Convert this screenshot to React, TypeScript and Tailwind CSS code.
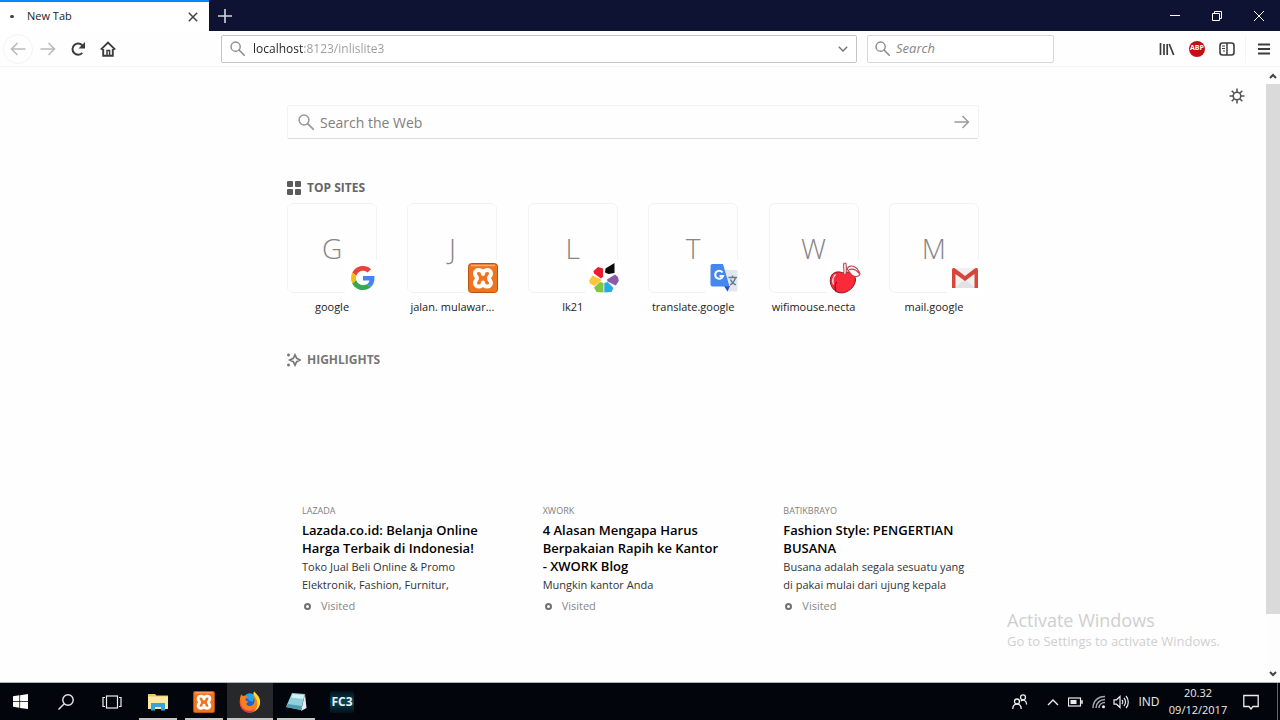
import type { ReactNode } from "react";

function SearchGlyph({ className }: { className: string }) {
  return (
    <svg viewBox="0 0 16 16" className={className} fill="none" stroke="currentColor" aria-hidden="true">
      <circle cx="6" cy="6" r="4.9" strokeWidth="1.5" />
      <path d="M9.6 9.6 15.2 15.200" strokeWidth="1.7" strokeLinecap="round" />
    </svg>
  );
}

function XamppLogo({ className }: { className: string }) {
  return (
    <svg viewBox="0 0 30 30" className={className} aria-hidden="true">
      <rect x="0.5" y="0.5" width="29" height="29" rx="3" fill="#f0741f" stroke="#b8530f" />
      <path d="M3 2.5h24" stroke="#fbb27a" strokeWidth="1.4" />
      <path
        d="M15 11C15 6 7 5.500 7 10.500C7 13 9 13.500 9 15.300C9 17 7 17.500 7 20C7 25 15 24.500 15 19.500C15 24.500 23 25 23 20C23 17.500 21 17 21 15.300C21 13.500 23 13 23 10.500C23 5.500 15 6 15 11z"
        fill="#f0741f"
        stroke="#fff"
        strokeWidth="4"
        strokeLinejoin="round"
      />
    </svg>
  );
}

function GoogleLogo() {
  return (
    <svg viewBox="0 0 48 48" className="size-6" aria-hidden="true">
      <path fill="#EA4335" d="M24 9.500c3.540 0 6.710 1.220 9.210 3.600l6.850-6.850C35.900 2.380 30.470 0 24 0 14.620 0 6.510 5.380 2.560 13.220l7.980 6.190C12.430 13.720 17.740 9.500 24 9.500z" />
      <path fill="#4285F4" d="M46.980 24.550c0-1.570-.15-3.090-.38-4.550H24v9.020h12.940c-.58 2.960-2.260 5.480-4.780 7.180l7.730 6c4.510-4.180 7.090-10.360 7.090-17.650z" />
      <path fill="#FBBC05" d="M10.530 28.590c-.48-1.450-.76-2.990-.76-4.590s.27-3.140.76-4.590l-7.980-6.190C.92 16.460 0 20.120 0 24c0 3.880.92 7.540 2.560 10.780l7.970-6.190z" />
      <path fill="#34A853" d="M24 48c6.480 0 11.930-2.130 15.890-5.810l-7.730-6c-2.150 1.450-4.920 2.300-8.160 2.300-6.260 0-11.570-4.220-13.470-9.910l-7.980 6.190C6.510 42.620 14.620 48 24 48z" />
    </svg>
  );
}

function Lk21Logo() {
  return (
    <svg viewBox="0 0 30 30" className="size-[30px]" aria-hidden="true">
      <path fill="#0c0c0c" d="M16.500 5.500 25.500 0v10l-6 1-3.500-1.500z" />
      <path fill="#ee1c2e" d="M4.500 8 9 4l5 1.500v8L12 15.500 5 10.500z" />
      <path fill="#fbc63c" d="M0 17.500 3.500 12.500l8.500 4v1.500l-6.500 5L1.500 21z" />
      <path fill="#84c441" d="M5 24.500l6-5.500 3.500 1v9.500L7.500 29z" />
      <path fill="#25ace3" d="M15.300 20l3.200-1 6 6-2 4-7.200.500z" />
      <path fill="#8a5cab" d="M18 16.500 26 11.500l3 2.500.8 4-3 4.500-8.300-4z" />
    </svg>
  );
}

function TranslateLogo() {
  return (
    <svg viewBox="0 0 28 28" className="size-7" aria-hidden="true">
      <path d="M11 6h15a1.500 1.500 0 0 1 1.500 1.500V26a1.500 1.500 0 0 1-1.500 1.500H17z" fill="#e3e6ec" />
      <path d="M14 22h6l-2.500 5.500z" fill="#2b50b4" />
      <path d="M2 0h11l6.500 22.500H2.500A2 2 0 0 1 .5 20.500V2A2 2 0 0 1 2 0z" fill="#4587ee" />
      <path d="M12.500 8.500A4 4 0 1 0 13 12H9.500" fill="none" stroke="#fff" strokeWidth="2.100" />
      <path d="M18.500 13.500h8.500M22.500 11.500v2M25.500 13.500c-.8 3.500-3 6-5.500 7.500M20.500 15.500c1 2.500 3 4.500 5.500 5.500" fill="none" stroke="#66788a" strokeWidth="1.300" />
    </svg>
  );
}

function AppleLogo() {
  return (
    <svg viewBox="0 0 32 32" className="size-8" aria-hidden="true">
      <path d="M14 11C9 8.500 2 10 1.300 17.500c-.3 5 1.700 9 5.700 12 2 1.300 6 1.800 8.500 1C21 29 26 24 26.500 18 26.500 11 20 8.500 14 11z" fill="#fa2a38" stroke="#8a1420" strokeWidth="1" />
      <path d="M6.500 12.500c-3 3-3 7-2 10" fill="none" stroke="#fff" strokeWidth="1.100" />
      <path d="M7 29c-1.500-3-1-6 .5-9" fill="none" stroke="#7c0c18" strokeWidth="1.100" />
      <path d="M14.500 12c1-3-.5-7 0-10.500l2.500-.5c.3 4 1 7 0 10.500" fill="#fbd5d8" stroke="#a8404c" strokeWidth="0.900" />
      <path d="M18 7c2-5 10-4 13 5-1 3-5 3-7.500 1.500C21 12 20 8.500 18 7zM20 7.500c4-1 8 1 10 4" fill="#fff4f4" stroke="#b84450" strokeWidth="1.100" />
    </svg>
  );
}

function GmailLogo() {
  return (
    <svg viewBox="0 0 28 22" className="h-[22px] w-7" aria-hidden="true">
      <rect x="1" y="1" width="26" height="20" rx="1.500" fill="#f1f1f1" />
      <path d="M4 21 14 12l10 9z" fill="#e2e2e2" />
      <path d="M1 21V3.200C1 .8 3 .6 4.200 1.500L14 9l9.800-7.500C25 .6 27 .8 27 3.200V21h-3.500V7L14 14 4.500 7v14z" fill="#d8453a" />
    </svg>
  );
}

function FirefoxLogo() {
  return (
    <svg viewBox="0 0 24 24" className="size-[22px]" aria-hidden="true">
      <circle cx="11.500" cy="11.500" r="8.500" fill="#1a62c9" />
      <path d="M6 6c3-5 9-4 11-1l-2 7-4-2z" fill="#23a4ea" />
      <path d="M2.500 3.500C3 5 4 5.500 6 5.300c1.500 0 2.500.5 3.500 1.500-2 .7-2.500 1.500-2.300 3 .5 1 2 1.200 3 1.500 0 1.500-1.500 1.700-2.200 2.500 1 2.500 4 3.200 6.500 1.700 3-2 3-6 1.500-8.500-1-2-1-4.500.5-6.500 1.500 2.500 6.500 5 6.500 11.500C23 18.500 18 23.500 12 23.500S.8 19 .8 12.500c0-3.500.5-6.500 1.700-9z" fill="#fb7d1e" />
      <path d="M16.500.5c1.500 2.500 6.500 5 6.500 11.500 0 4-2.500 8-6 9.800 3-3.300 4-8.300 2-12.800-1.500-3-3.500-5-2.500-8.500z" fill="#fde02f" />
      <path d="M1.500 8C.5 15 4 21 11 21.500c3 0 5-1 6.500-2.500-1.500 3-4 4.500-6 4.500C4.500 23.500-.5 17 1.500 8z" fill="#e5285b" />
    </svg>
  );
}

const sites: { letter: string; name: string; logo: ReactNode }[] = [
  { letter: "G", name: "google", logo: <GoogleLogo /> },
  { letter: "J", name: "jalan. mulawar...", logo: <XamppLogo className="size-[30px]" /> },
  { letter: "L", name: "lk21", logo: <Lk21Logo /> },
  { letter: "T", name: "translate.google", logo: <TranslateLogo /> },
  { letter: "W", name: "wifimouse.necta", logo: <AppleLogo /> },
  { letter: "M", name: "mail.google", logo: <GmailLogo /> },
];

const highlights = [
  { source: "LAZADA", title: "Lazada.co.id: Belanja Online\nHarga Terbaik di Indonesia!", text: "Toko Jual Beli Online & Promo\nElektronik, Fashion, Furnitur," },
  { source: "XWORK", title: "4 Alasan Mengapa Harus\nBerpakaian Rapih ke Kantor\n- XWORK Blog", text: "Mungkin kantor Anda" },
  { source: "BATIKBRAYO", title: "Fashion Style: PENGERTIAN\nBUSANA", text: "Busana adalah segala sesuatu yang\ndi pakai mulai dari ujung kepala" },
];

function TabStrip() {
  return (
    <header className="flex h-[31px] shrink-0 bg-[#0f1333] text-white">
      <div className="flex w-[209px] items-center border-t-2 border-[#0a84ff] bg-white pr-2 pl-[10px] text-[#222]">
        <span className="h-[3px] w-1 rounded-full bg-[#444]" />
        <span className="ml-[13px] flex-1 text-[11px]">New Tab</span>
        <button aria-label="Close tab" className="flex size-4 items-center justify-center text-[#444]">
          <svg viewBox="0 0 10 10" className="size-[10px]" stroke="currentColor" strokeWidth="1.500">
            <path d="m.8.8 8.400 8.400M9.200.8.800 9.200" />
          </svg>
        </button>
      </div>
      <button aria-label="Open a new tab" className="flex w-8 items-center justify-center">
        <svg viewBox="0 0 14 14" className="size-[14px]" stroke="#d4d6e2" strokeWidth="1.600">
          <path d="M7 0v14M0 7h14" />
        </svg>
      </button>
      <div className="ml-auto flex">
        <button aria-label="Minimize" className="flex w-[42px] items-center justify-center">
          <span className="h-px w-[10px] bg-white" />
        </button>
        <button aria-label="Restore" className="flex w-[42px] items-center justify-center">
          <svg viewBox="0 0 10 10" className="size-[10px]" fill="none" stroke="#fff">
            <path d="M.5 2.500h7v7h-7zM2.500 2.500v-2h7v7h-2" />
          </svg>
        </button>
        <button aria-label="Close window" className="flex w-[42px] items-center justify-center">
          <svg viewBox="0 0 10 10" className="size-[10px]" stroke="#fff">
            <path d="m0 0 10 10M10 0 0 10" />
          </svg>
        </button>
      </div>
    </header>
  );
}

function ToolButton({ label, children }: { label: string; children: ReactNode }) {
  return (
    <button aria-label={label} className="flex size-[30px] shrink-0 items-center justify-center rounded-full text-[#3c3c40]">
      {children}
    </button>
  );
}

function Toolbar() {
  return (
    <nav className="flex h-9 shrink-0 items-center border-b border-[#f4f4f4] bg-[#fefefe] pr-px pl-[3px]">
      <button aria-label="Back" className="flex size-[30px] shrink-0 items-center justify-center rounded-full border border-[#f4f4f4] text-[#bbb]">
        <svg viewBox="0 0 16 16" className="size-4" fill="none" stroke="currentColor" strokeWidth="1.600">
          <path d="M15.500 8H1.500M7.500 2l-6 6 6 6" />
        </svg>
      </button>
      <ToolButton label="Forward">
        <svg viewBox="0 0 16 16" className="size-4 text-[#bbb]" fill="none" stroke="currentColor" strokeWidth="1.600">
          <path d="M.5 8h14M8.500 2l6 6-6 6" />
        </svg>
      </ToolButton>
      <ToolButton label="Reload">
        <svg viewBox="0 0 16 16" className="size-4" fill="none" stroke="currentColor" strokeWidth="2">
          <path d="M12.300 11.800A5.600 5.600 0 1 1 12.500 4.600" />
          <path d="M15 1v6.500H8.500z" fill="currentColor" stroke="none" />
        </svg>
      </ToolButton>
      <ToolButton label="Home">
        <svg viewBox="0 0 16 16" className="size-4" fill="none" stroke="currentColor" strokeWidth="1.900">
          <path d="M.8 8.600 8 1.600l7.200 7M3.200 8v6.800h9.600V8" />
          <path d="M7 14.500V9.500h2.600v5" strokeWidth="1.500" />
        </svg>
      </ToolButton>
      <div className="ml-[98px] flex h-7 min-w-0 flex-1 items-center rounded-xs border border-[#c4c4c4] bg-white px-2">
        <SearchGlyph className="size-[15px] shrink-0 text-[#8c8c8c]" />
        <input
          aria-label="Address"
          defaultValue="localhost:8123/inlislite3"
          className="ml-2 min-w-0 flex-1 bg-linear-to-r from-[#222] from-[51px] to-[#999] to-[51px] bg-clip-text pt-px text-[12px] text-transparent outline-none"
        />
        <button aria-label="Show history" className="text-[#777]">
          <svg viewBox="0 0 10 6" className="h-[6px] w-[10px]" fill="none" stroke="currentColor" strokeWidth="1.500">
            <path d="m.8.8 4.200 4.200L9.200.8" />
          </svg>
        </button>
      </div>
      <div className="ml-[10px] flex h-7 w-[187px] shrink-0 items-center rounded-xs border border-[#d8d8d8] bg-white px-[7px]">
        <SearchGlyph className="size-[15px] shrink-0 text-[#8c8c8c]" />
        <input aria-label="Search" placeholder="Search" className="ml-[6px] min-w-0 flex-1 pt-px text-[13px] italic outline-none placeholder:text-[#858585]" />
      </div>
      <div className="ml-[98px] flex shrink-0 items-center">
        <ToolButton label="Library">
          <svg viewBox="0 0 16 16" className="size-4" fill="none" stroke="currentColor" strokeWidth="1.700">
            <path d="M1.500 2v12M5 3v11M8.200 3v11M10.200 3l4.500 11" />
          </svg>
        </ToolButton>
        <ToolButton label="Adblock Plus">
          <span className="flex size-4 items-center justify-center rounded-full bg-[#c70d12] text-[7px] font-bold text-white">ABP</span>
        </ToolButton>
        <ToolButton label="Sidebars">
          <svg viewBox="0 0 16 16" className="size-4" fill="none" stroke="currentColor">
            <rect x="1" y="2" width="14" height="12" rx="2.500" strokeWidth="1.600" />
            <path d="M8 2v12" strokeWidth="1.500" />
            <path d="M3 5h3M3 7.500h3M4 10h2" strokeWidth="1" />
          </svg>
        </ToolButton>
        <span className="mx-[3px] h-7 w-px bg-[#f4f4f4]" />
        <ToolButton label="Open menu">
          <svg viewBox="0 0 12 12" className="size-3" stroke="currentColor" strokeWidth="1.800">
            <path d="M0 1.500h12M0 6h12M0 10.500h12" />
          </svg>
        </ToolButton>
      </div>
    </nav>
  );
}

function NewTabPage() {
  return (
    <main className="relative flex min-h-0 flex-1">
      <div className="min-w-0 flex-1 overflow-hidden">
        <div className="mx-auto w-[692px] max-w-full pt-[38px]">
          <form className="flex h-[34px] items-center rounded-xs border border-[#f2f2f2] border-b-[#dcdcdc] pr-2 pl-[10px]">
            <SearchGlyph className="size-4 shrink-0 text-[#999]" />
            <input aria-label="Search the Web" placeholder="Search the Web" className="ml-[6px] min-w-0 flex-1 pt-px text-[14px] outline-none placeholder:text-[#808080]" />
            <button type="button" aria-label="Submit search" className="text-[#999]">
              <svg viewBox="0 0 16 14" className="h-[14px] w-4" fill="none" stroke="currentColor" strokeWidth="1.400">
                <path d="M.5 7h14M8.500 1l6 6-6 6" />
              </svg>
            </button>
          </form>

          <section className="mt-[39px]">
            <h2 className="flex h-5 items-center gap-[6px] text-[12px] font-bold text-[#666]">
              <svg viewBox="0 0 14 14" className="size-[14px]" fill="#5c5c5c" aria-hidden="true">
                <rect width="6" height="6" rx="1" />
                <rect x="8" width="6" height="6" rx="1" />
                <rect y="8" width="6" height="6" rx="1" />
                <rect x="8" y="8" width="6" height="6" rx="1" />
              </svg>
              TOP SITES
            </h2>
            <ul className="mt-[5px] flex justify-between">
              {sites.map((site) => (
                <li key={site.letter} className="w-[90px]">
                  <a href="#" className="block">
                    <div className="relative flex h-[90px] items-center justify-center rounded-md border border-[#f2f2f2] text-[28px] font-light text-[#858585]">
                      {site.letter}
                      <span className="absolute -right-[5px] -bottom-1 flex size-9 items-center justify-center rounded-sm bg-white">
                        {site.logo}
                      </span>
                    </div>
                    <div className="mt-1 text-center text-[11px] leading-5 whitespace-nowrap text-[#222]">{site.name}</div>
                  </a>
                </li>
              ))}
            </ul>
          </section>

          <section className="mt-[33px]">
            <h2 className="flex h-5 items-center gap-[6px] text-[12px] font-bold text-[#777]">
              <svg viewBox="0 0 14 14" className="size-[14px]" fill="none" stroke="currentColor" aria-hidden="true">
                <path d="M8 1.800 9.700 5.300 13.200 7 9.700 8.700 8 12.200 6.300 8.700 2.800 7 6.300 5.300z" strokeWidth="1.700" />
                <path d="M1.500.5v3M0 2h3M1.500 10.500v3M0 12h3" strokeWidth="1.400" />
              </svg>
              HIGHLIGHTS
            </h2>
            <ul className="mt-[133px] grid grid-cols-3 gap-[30px]">
              {highlights.map((item) => (
                <li key={item.source} className="px-[15px]">
                  <a href="#" className="block">
                    <p className="text-[9px] leading-4 text-[#808080]">{item.source}</p>
                    <h3 className="mt-[2px] text-[13px] leading-[18px] font-semibold whitespace-pre text-black">{item.title}</h3>
                    <p className="mt-px text-[11px] leading-[18px] whitespace-pre text-[#333]">{item.text}</p>
                    <p className="mt-[3px] flex items-center text-[11px] leading-[18px] text-[#888]">
                      <span className="ml-[2px] size-[7px] rounded-full border-2 border-[#707070]" />
                      <span className="ml-[10px]">Visited</span>
                    </p>
                  </a>
                </li>
              ))}
            </ul>
          </section>
        </div>
      </div>

      <button aria-label="Customize page" className="absolute top-[21px] right-[35px] text-[#555]">
        <svg viewBox="0 0 16 16" className="size-4" fill="none" stroke="currentColor" strokeWidth="1.600" aria-hidden="true">
          <circle cx="8" cy="8" r="3.800" />
          <path d="M8 .5v3.500M8 12v3.500M.5 8H4M12 8h3.500M2.700 2.700l2.500 2.500M10.800 10.800l2.500 2.500M13.300 2.700l-2.500 2.500M5.200 10.800l-2.500 2.500" />
        </svg>
      </button>

      <aside className="absolute right-[51px] bottom-8 w-[222px] whitespace-nowrap text-[#cfcfcf]">
        <p className="text-[18px] leading-6">Activate Windows</p>
        <p className="text-[13px] leading-[18px]">Go to Settings to activate Windows.</p>
      </aside>

      <div className="flex w-[14px] shrink-0 flex-col items-center bg-[#fdfdfd] text-[#444]" aria-hidden="true">
        <div className="flex h-[17px] items-center">
          <svg viewBox="0 0 8 6" className="h-[6px] w-2" fill="none" stroke="currentColor" strokeWidth="2">
            <path d="m1 5 3-3 3 3" />
          </svg>
        </div>
        <div className="w-full grow-21 bg-[#dadada]" />
        <div className="w-full grow-2" />
        <div className="flex h-[17px] items-center">
          <svg viewBox="0 0 8 6" className="h-[6px] w-2" fill="none" stroke="currentColor" strokeWidth="2">
            <path d="m1 1 3 3 3-3" />
          </svg>
        </div>
      </div>
    </main>
  );
}

function TaskButton({ label, running, active, children }: { label: string; running?: boolean; active?: boolean; children: ReactNode }) {
  return (
    <button aria-label={label} className={`relative flex w-[46px] items-center justify-center ${active ? "bg-[#26282b]" : ""}`}>
      {children}
      {running && <span className={`absolute bottom-0 h-[2px] bg-[#c9c5c2] ${active ? "w-[46px]" : "w-[38px]"}`} />}
    </button>
  );
}

function Taskbar() {
  return (
    <footer className="flex h-[38px] shrink-0 border-t border-[#b4b4b8] bg-[#03050d] text-white">
      <button aria-label="Start" className="flex w-[43px] items-center justify-center pr-[2px]">
        <svg viewBox="0 0 16 16" className="size-[15px]" fill="#fff">
          <path d="M0 2.300 6.800 1.300v6.300H0zM7.600 1.200 16 0v7.600H7.600zM0 8.400h6.800v6.300L0 13.700zM7.600 8.400H16V16l-8.400-1.200z" />
        </svg>
      </button>
      <TaskButton label="Search Windows">
        <svg viewBox="0 0 16 16" className="size-4" fill="none" stroke="#e8e8e8" strokeWidth="1.400">
          <circle cx="10" cy="6" r="5.200" />
          <path d="M6.300 9.700.5 15.500" />
        </svg>
      </TaskButton>
      <TaskButton label="Task View">
        <svg viewBox="0 0 20 14" className="h-[14px] w-5" fill="none" stroke="#eee" strokeWidth="1.200">
          <rect x="4.500" y="1" width="11" height="12" />
          <path d="M3 2.500H1v9h2M17 2.500h2v9h-2" />
        </svg>
      </TaskButton>
      <TaskButton label="File Explorer" running>
        <svg viewBox="0 0 20 18" className="h-[18px] w-5">
          <path d="M0 1h7l1.500 1.500H20V16H0z" fill="#e9c862" />
          <path d="M0 3.500h20V16H0z" fill="#fbeaa0" />
          <path d="M3 17.500v-7.500h14v7.500h-4v-3.500H7v3.500z" fill="#35a6dc" />
        </svg>
      </TaskButton>
      <TaskButton label="XAMPP" running>
        <XamppLogo className="size-[22px]" />
      </TaskButton>
      <TaskButton label="Firefox" running active>
        <FirefoxLogo />
      </TaskButton>
      <TaskButton label="Notepad" running>
        <svg viewBox="0 0 22 20" className="h-5 w-[22px]">
          <path d="M7 1 20 2l-4 16L1 15z" fill="#8fd0dc" />
          <path d="M8 2 19 3l-1 4L6 5.500z" fill="#d3f1f5" />
          <path d="m3 12 14 2-1 4-15-3z" fill="#4d9db0" />
          <path d="m20 2 1.500 14-5.500 3z" fill="#e8eef0" />
        </svg>
      </TaskButton>
      <TaskButton label="Far Cry 3">
        <span className="flex h-[22px] items-center rounded-xs bg-linear-to-b from-[#03101a] via-[#0b4557] to-[#03101a] px-px text-[12px] leading-none font-bold text-[#e6f2f5]">FC3</span>
      </TaskButton>

      <div className="ml-auto flex items-stretch text-[#ececec]">
        <button aria-label="People" className="flex w-[46px] items-center justify-center">
          <svg viewBox="0 0 16 16" className="size-4" fill="none" stroke="currentColor" strokeWidth="1.300">
            <circle cx="5" cy="7.500" r="2.500" />
            <path d="M.8 15c0-6.500 8.400-6.500 8.400 0" />
            <circle cx="11" cy="3.300" r="2.500" />
            <path d="M8.800 7c2.500-2 5.800-.5 5.800 3.500" />
          </svg>
        </button>
        <button aria-label="Show hidden icons" className="flex w-5 items-center justify-center">
          <svg viewBox="0 0 12 8" className="h-2 w-3" fill="none" stroke="currentColor" strokeWidth="1.400">
            <path d="m1 7 5-5 5 5" />
          </svg>
        </button>
        <button aria-label="Battery" className="flex w-6 items-center justify-center">
          <svg viewBox="0 0 15 10" className="h-[10px] w-[15px]" fill="none" stroke="currentColor">
            <rect x="0.500" y="1" width="12" height="8" strokeWidth="1.200" />
            <path d="M14 3.200v3.600" strokeWidth="1.600" />
            <path d="M2.500 3h6v4h-6z" fill="currentColor" stroke="none" />
          </svg>
        </button>
        <button aria-label="Network" className="flex w-6 items-center justify-center">
          <svg viewBox="0 0 14 14" className="size-[14px]" fill="none" stroke="#a8a8ac" strokeWidth="1.400">
            <path d="M1 13C1 6 6 1.500 13 1.500M4 13c0-5 4-8.500 9-8.500M7 13c0-3.300 2.700-5.500 6-5.500" />
            <circle cx="11.500" cy="11.800" r="1.500" fill="#eee" stroke="none" />
          </svg>
        </button>
        <button aria-label="Volume" className="flex w-5 items-center justify-center">
          <svg viewBox="0 0 16 14" className="h-[14px] w-4" fill="none" stroke="currentColor" strokeWidth="1.200">
            <path d="M1 4.800h2.500L7 1.500v11L3.500 9.200H1zM9 5c1 1 1 3 0 4M11 3c2 2 2 6 0 8M13 1c3 3 3 9 0 12" />
          </svg>
        </button>
        <button className="w-9 text-[12px]">IND</button>
        <button className="w-[62px] pb-[2px] text-center text-[11px] leading-[17px]">
          <span className="block">20.32</span>
          <span className="block">09/12/2017</span>
        </button>
        <button aria-label="Notifications" className="flex w-[44px] items-center justify-center">
          <svg viewBox="0 0 16 16" className="size-4" fill="none" stroke="currentColor" strokeWidth="1.300">
            <path d="M.8 1.500h14.400v11H10L8 15l-2-2.500H.8z" />
          </svg>
        </button>
        <button aria-label="Show desktop" className="ml-1 w-[3px] border-l border-[#666]" />
      </div>
    </footer>
  );
}

export default function App() {
  return (
    <div className="flex h-screen flex-col bg-[#fefefe] font-['Open_Sans','Noto_Sans',sans-serif]">
      <TabStrip />
      <Toolbar />
      <NewTabPage />
      <Taskbar />
    </div>
  );
}
